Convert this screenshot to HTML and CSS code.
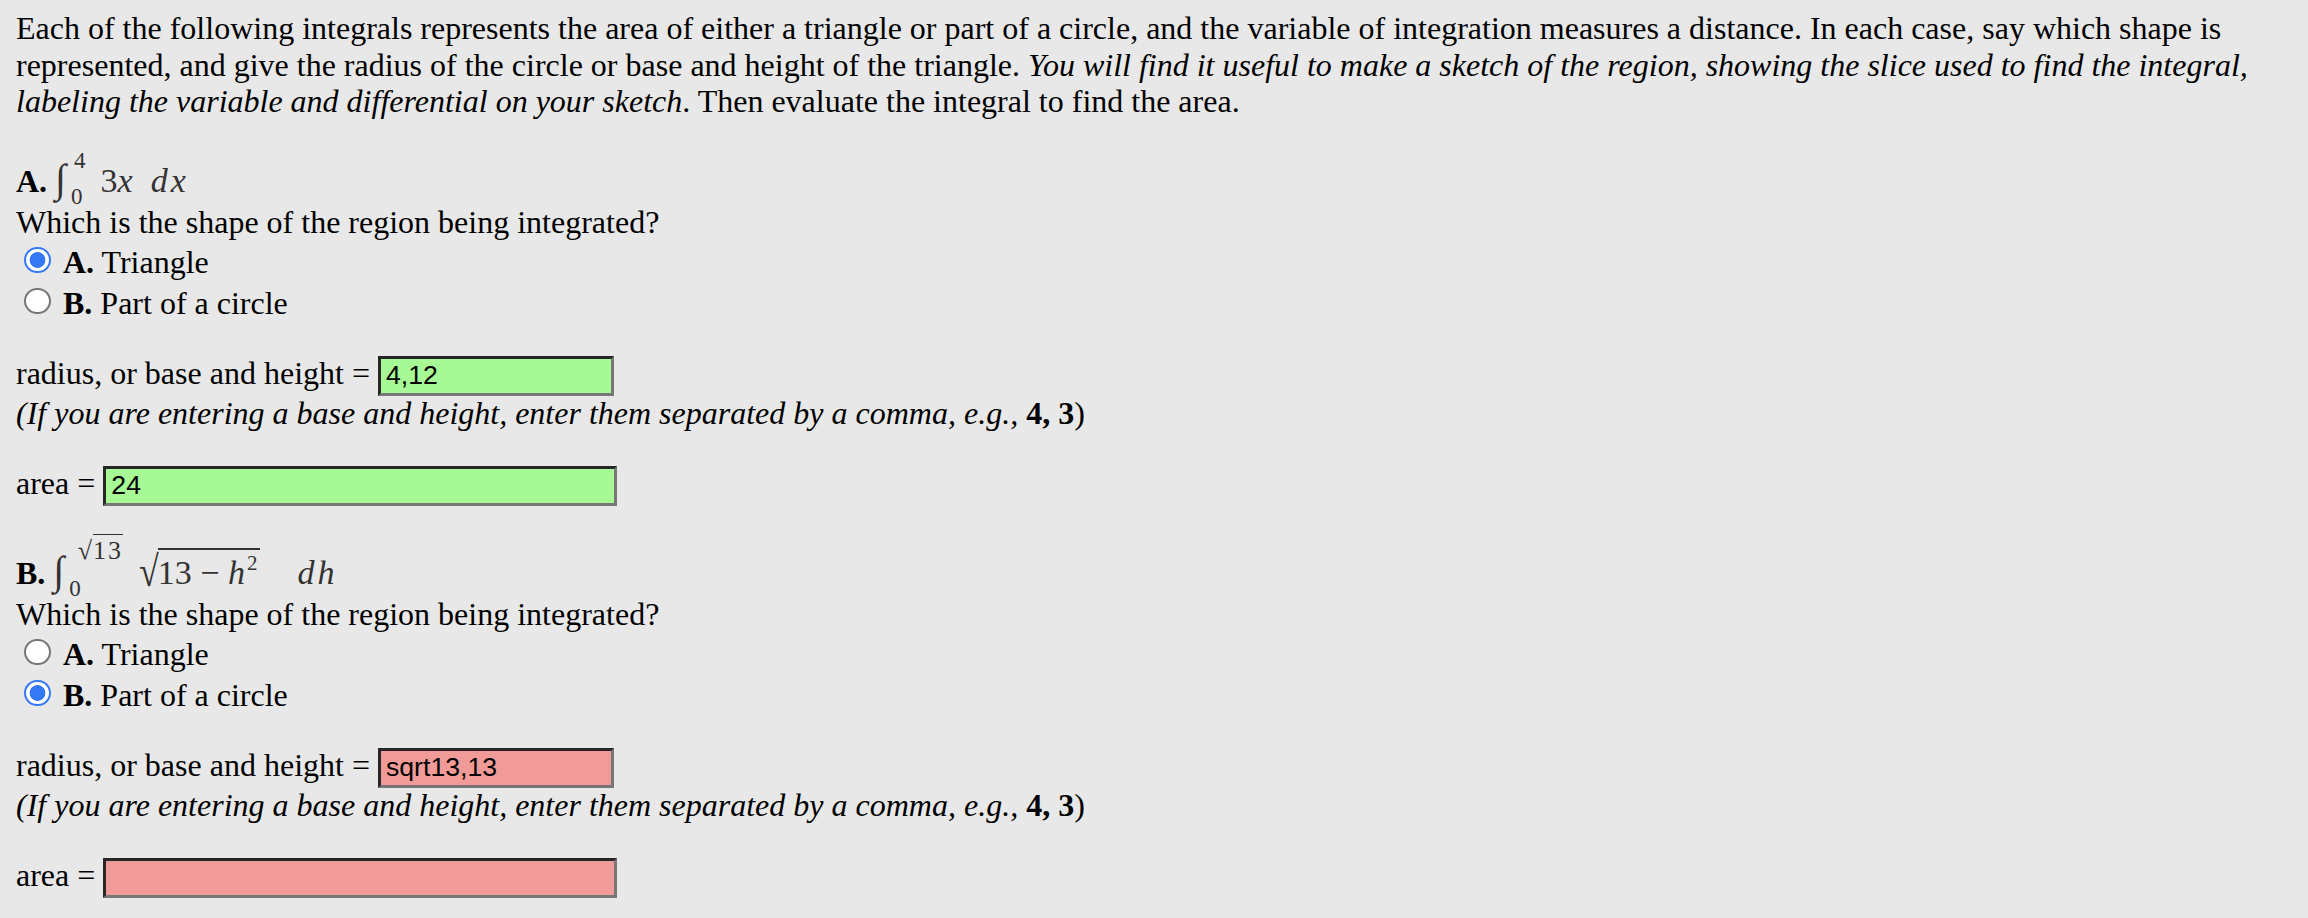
FILE: index.html
```html
<!DOCTYPE html>
<html lang="en">
<head>
<meta charset="utf-8">
<title>Integrals as areas</title>
<link rel="stylesheet" href="styles.css">
</head>
<body>
<main class="page">
  <p class="intro">Each of the following integrals represents the area of either a triangle or part of a circle, and the variable of integration measures a distance. In each case, say which shape is represented, and give the radius of the circle or base and height of the triangle. <em>You will find it useful to make a sketch of the region, showing the slice used to find the integral, labeling the variable and differential on your sketch</em>. Then evaluate the integral to find the area.</p>

  <section class="problem">
    <div class="heading"><b>A.</b> <span class="math"><span class="int">∫</span><span class="lim lo">0</span><span class="lim up">4</span><span class="expr">3<i>x</i><span class="thin"></span><i>d</i><i>x</i></span></span></div>
    <div class="question">Which is the shape of the region being integrated?</div>
    <div class="choice"><span class="radio checked"></span><b>A.</b> Triangle</div>
    <div class="choice"><span class="radio"></span><b>B.</b> Part of a circle</div>
    <div class="answer">radius, or base and height = <span class="field correct">4,12</span></div>
    <div class="hint"><i>(If you are entering a base and height, enter them separated by a comma, e.g.,</i> <b>4, 3</b>)</div>
    <div class="answer area">area = <span class="field wide correct">24</span></div>
  </section>

  <section class="problem">
    <div class="heading"><b>B.</b> <span class="math"><span class="int">∫</span><span class="lim lo">0</span><span class="lim up up-root"><span class="rad-sm">√</span><span class="over-sm">13</span></span><span class="expr expr-root"><span class="rad">√</span><span class="over">13 − <i>h</i><span class="sq">2</span></span><span class="thin"></span><i>d</i><i>h</i></span></span></div>
    <div class="question">Which is the shape of the region being integrated?</div>
    <div class="choice"><span class="radio"></span><b>A.</b> Triangle</div>
    <div class="choice"><span class="radio checked"></span><b>B.</b> Part of a circle</div>
    <div class="answer">radius, or base and height = <span class="field wrong">sqrt13,13</span></div>
    <div class="hint"><i>(If you are entering a base and height, enter them separated by a comma, e.g.,</i> <b>4, 3</b>)</div>
    <div class="answer area">area = <span class="field wide wrong"></span></div>
  </section>
</main>
</body>
</html>
```

FILE: styles.css
```css
html, body {
  margin: 0;
  padding: 0;
  background: #e8e8e8;
}

body {
  font-family: "Liberation Serif", "Times New Roman", serif;
  font-size: 32px;
  color: #000;
}

.page {
  padding: 10.35px 16px 0;
}

.intro {
  margin: 0;
  line-height: 36.3px;
}

.problem {
  margin-top: 35.65px;
}

.problem + .problem {
  margin-top: 40.6px;
}

.heading {
  line-height: 52px;
  white-space: nowrap;
}

.question {
  line-height: 28px;
  margin-top: 1.5px;
}

.choice {
  line-height: 40px;
  margin-top: 6px;
}

.choice + .choice {
  margin-top: 1px;
}

.answer {
  line-height: 46px;
  margin-top: 27px;
}

.hint {
  line-height: 33px;
  margin-top: 0.5px;
}

.answer.area {
  margin-top: 30.5px;
}

/* radio buttons */
.radio {
  display: inline-block;
  box-sizing: border-box;
  width: 26.5px;
  height: 26.5px;
  border-radius: 50%;
  border: 2px solid #767676;
  background: #fff;
  margin: 0 12.5px 0 8px;
  vertical-align: baseline;
}

.radio.checked {
  border: 2.5px solid #3478f6;
  background: radial-gradient(circle, #3478f6 0 7.5px, #fff 8.2px);
}

/* answer fields */
.field {
  display: inline-block;
  box-sizing: border-box;
  width: 236px;
  height: 40px;
  border: 3px solid;
  border-color: #262626 #777 #777 #262626;
  padding: 2px 5px 4px;
  font-family: "Liberation Sans", Arial, sans-serif;
  font-size: 26.67px;
  line-height: 28px;
  vertical-align: baseline;
  white-space: nowrap;
}

.field:empty::before {
  content: "\200b";
}

.field.wide {
  width: 514px;
}

.field.correct {
  background: #a6f995;
}

.field.wrong {
  background: #f19b98;
}

/* math */
.math {
  color: #333;
  font-family: "Liberation Serif", "DejaVu Serif", serif;
}

.math i {
  font-style: italic;
  letter-spacing: 3px;
}

.int {
  font-size: 40px;
  line-height: 0;
  font-style: italic;
}

.lim {
  font-size: 23px;
  line-height: 0;
}

.lim.lo {
  vertical-align: -12px;
  margin-left: 5px;
}

.lim.up {
  vertical-align: 24px;
  margin-left: -8.5px;
}

.lim.up-root {
  vertical-align: 25px;
  margin-left: -3px;
  letter-spacing: 2px;
}

.expr {
  margin-left: 15px;
  font-size: 34px;
  line-height: 0;
}

.expr-root {
  margin-left: 16px;
}

.thin {
  display: inline-block;
  width: 15px;
}

.expr-root .thin {
  width: 38px;
}

.rad-sm {
  font-size: 26px;
}

.over-sm {
  font-size: 26px;
  border-top: 1.5px solid #333;
  padding-top: 1px;
  margin-left: -1px;
}

.rad {
  display: inline-block;
  font-size: 36px;
  line-height: 0;
  transform: scaleY(1.2);
  transform-origin: 50% 80%;
}

.over {
  border-top: 2px solid #333;
  padding-top: 4px;
  margin-left: -1px;
  padding-right: 2px;
}

.sq {
  font-size: 21px;
  line-height: 0;
  vertical-align: 14px;
  margin-left: -1px;
}
```
